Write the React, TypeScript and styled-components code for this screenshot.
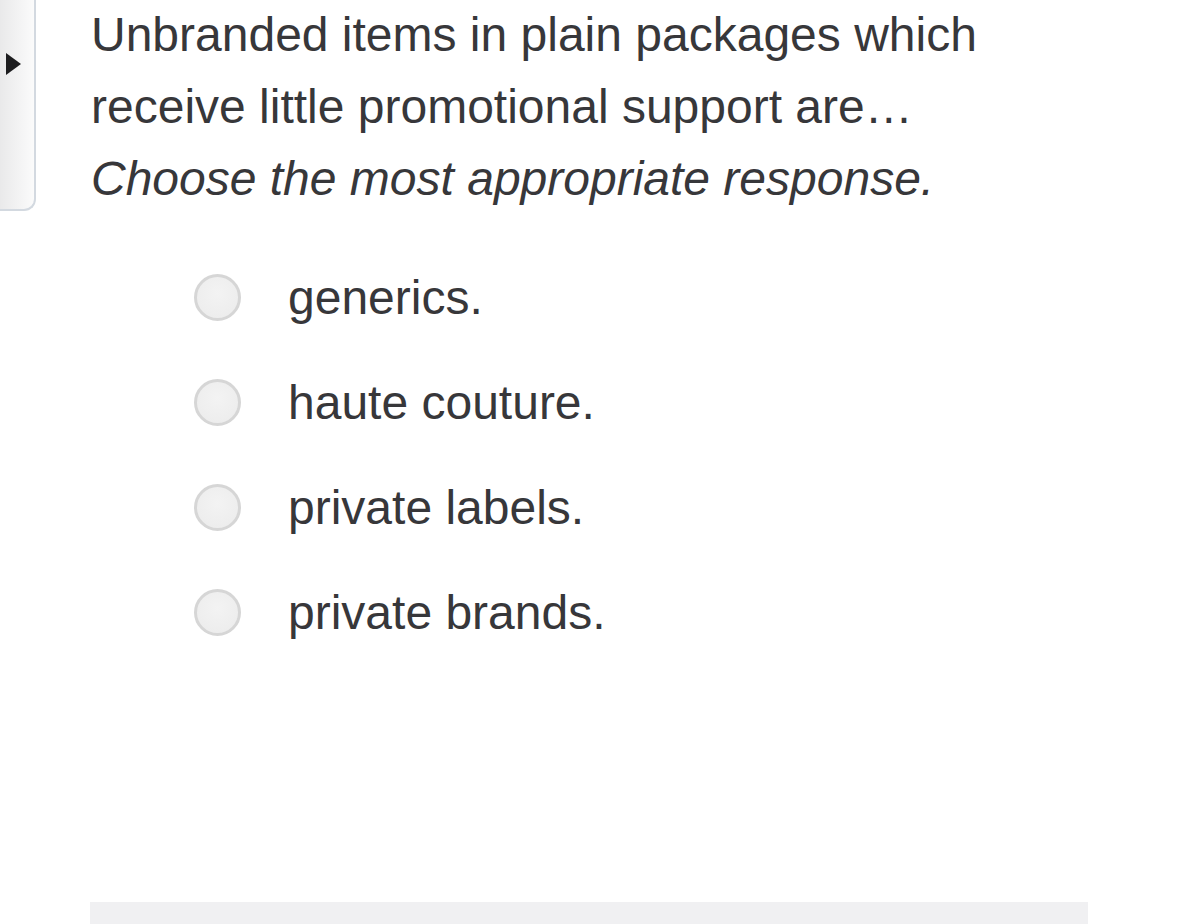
import styled, { createGlobalStyle } from "styled-components";

const GlobalStyle = createGlobalStyle`
  html, body {
    margin: 0;
    padding: 0;
    background: #ffffff;
  }
  body {
    font-family: "Liberation Sans", Arial, sans-serif;
    color: #37373a;
  }
`

const Page = styled.div`
  display: flex;
  flex-direction: column;
  height: 924px;
  overflow: hidden;
`

const QuestionRow = styled.div`
  display: flex;
  flex-direction: row;
  align-items: flex-start;
`

const SideTab = styled.div`
  width: 36px;
  height: 211px;
  flex-shrink: 0;
  display: flex;
  align-items: flex-start;
  padding-top: 53px;
  padding-left: 6px;
  box-sizing: border-box;
  background: linear-gradient(to right, #e9e9ea, #fbfbfb);
  border-right: 2px solid #d3d9e0;
  border-bottom: 2px solid #d3d9e0;
  border-bottom-right-radius: 12px;
`

const Arrow = styled.div`
  width: 0;
  height: 0;
  border-top: 11px solid transparent;
  border-bottom: 11px solid transparent;
  border-left: 15px solid #1c1c1e;
`

const Question = styled.div`
  margin-left: 55px;
  margin-top: -1px;
  font-size: 48px;
  line-height: 72px;
`

const Prompt = styled.div`
  font-style: italic;
`

const OptionList = styled.div`
  display: flex;
  flex-direction: column;
  margin-top: 30px;
  padding-left: 194px;
`

const OptionRow = styled.label`
  display: flex;
  flex-direction: row;
  align-items: center;
  height: 105px;
  gap: 47px;
  font-size: 48px;
`

const Radio = styled.span`
  width: 47px;
  height: 47px;
  box-sizing: border-box;
  border-radius: 50%;
  border: 3px solid #d6d6d6;
  background: radial-gradient(circle at 50% 40%, #f3f3f3, #ebebeb);
  flex-shrink: 0;
`

const Footer = styled.div`
  margin-top: auto;
  margin-left: 90px;
  width: 998px;
  height: 22px;
  background: #f0f0f2;
`

const options = ["generics.", "haute couture.", "private labels.", "private brands."];

export default function App() {
  return (
    <Page>
      <GlobalStyle />
      <QuestionRow>
        <SideTab>
          <Arrow />
        </SideTab>
        <Question>
          Unbranded items in plain packages which
          <br />
          receive little promotional support are…
          <Prompt>Choose the most appropriate response.</Prompt>
        </Question>
      </QuestionRow>
      <OptionList>
        {options.map((o) => (
          <OptionRow key={o}>
            <Radio />
            {o}
          </OptionRow>
        ))}
      </OptionList>
      <Footer />
    </Page>
  );
}
